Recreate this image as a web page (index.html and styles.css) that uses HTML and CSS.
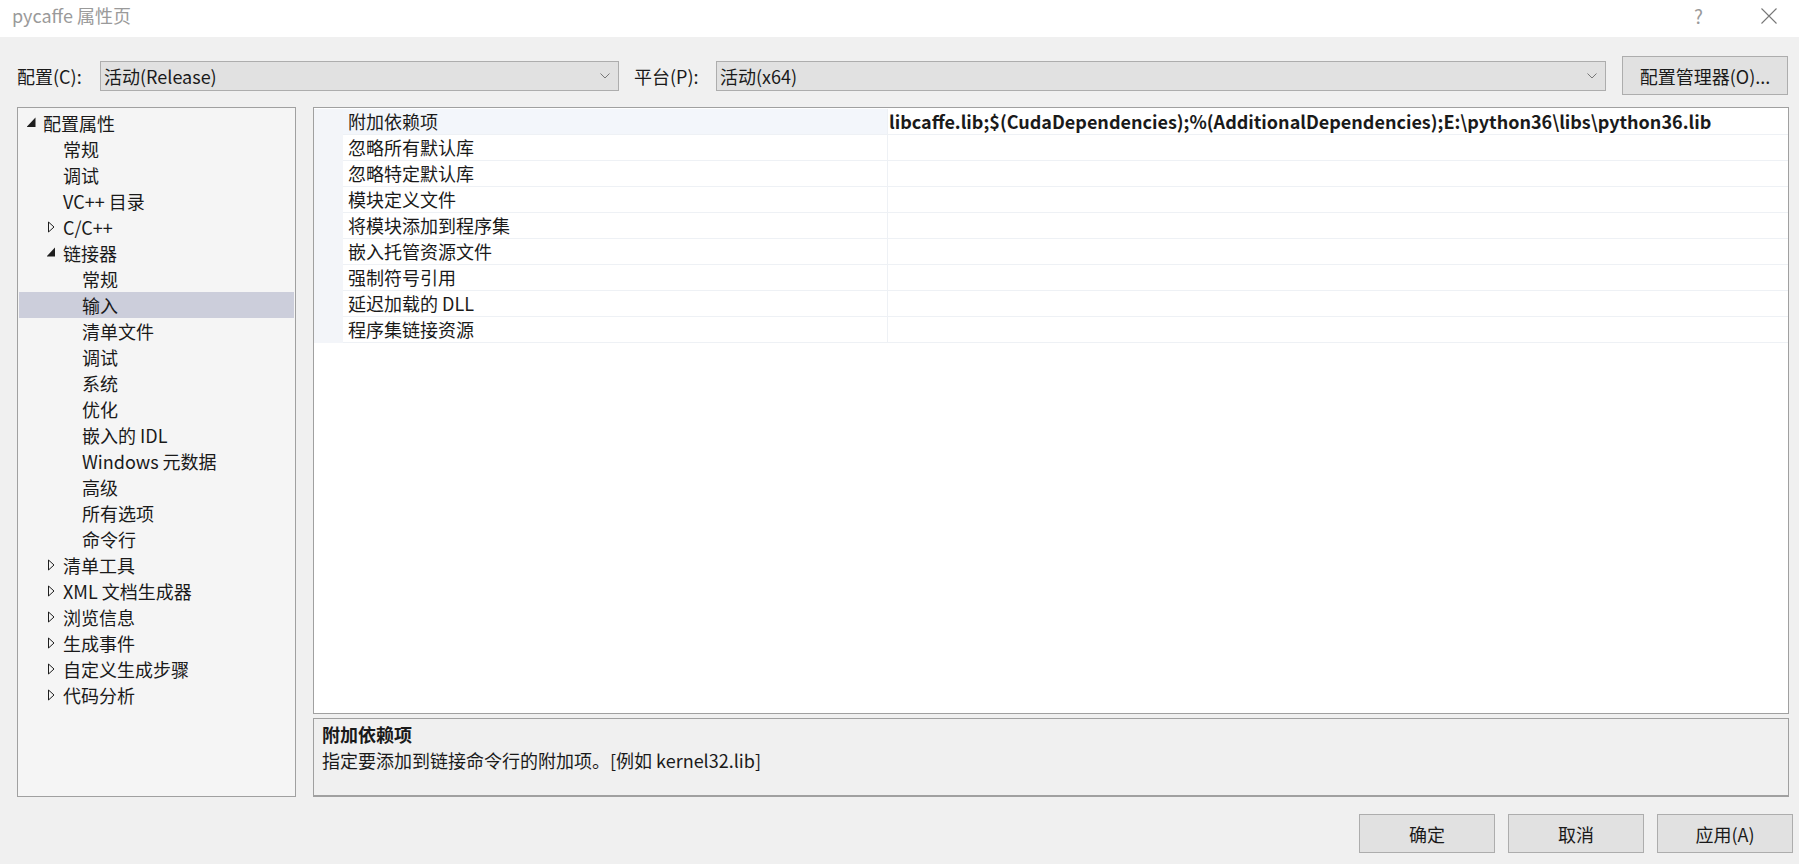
FILE: index.html
```html
<!DOCTYPE html>
<html lang="zh-CN">
<head>
<meta charset="utf-8"/>
<title>pycaffe 属性页</title>
<link rel="stylesheet" href="styles.css">
</head>
<body>
<div class="dialog">

  <!-- Barre de titre -->
  <div class="titlebar">
    <span class="title">pycaffe 属性页</span>
    <div class="caption">
      <span class="help">?</span>
      <svg class="close" width="16" height="16" viewBox="0 0 16 16">
        <path d="M0.5 0.5 L15.5 15.5 M15.5 0.5 L0.5 15.5" stroke="#777" stroke-width="1.1" fill="none"/>
      </svg>
    </div>
  </div>

  <!-- Configuration / plateforme -->
  <div class="toolbar">
    <label class="lbl-config">配置(C):</label>
    <div class="combo combo-config">
      <span>活动(Release)</span>
      <svg width="12" height="8" viewBox="0 0 12 8"><path d="M1.5 1.5 L6 6 L10.5 1.5" stroke="#777" stroke-width="1" fill="none"/></svg>
    </div>
    <label class="lbl-platform">平台(P):</label>
    <div class="combo combo-platform">
      <span>活动(x64)</span>
      <svg width="12" height="8" viewBox="0 0 12 8"><path d="M1.5 1.5 L6 6 L10.5 1.5" stroke="#777" stroke-width="1" fill="none"/></svg>
    </div>
    <button type="button" class="btn btn-manager">配置管理器(O)...</button>
  </div>

  <div class="main">
    <!-- Arborescence -->
    <div class="tree">
      <div class="node l0"><span class="arrow"><svg width="16" height="26" viewBox="0 0 16 26"><polygon points="8.5,7.5 8.5,17 -0.5,17" fill="#1e1e1e"/></svg></span>配置属性</div>
      <div class="node l1"><span class="arrow"></span>常规</div>
      <div class="node l1"><span class="arrow"></span>调试</div>
      <div class="node l1"><span class="arrow"></span>VC++ 目录</div>
      <div class="node l1"><span class="arrow"><svg width="16" height="26" viewBox="0 0 16 26"><polygon points="1.5,8 1.5,18 7,13" fill="none" stroke="#1e1e1e" stroke-width="1"/></svg></span>C/C++</div>
      <div class="node l1"><span class="arrow"><svg width="16" height="26" viewBox="0 0 16 26"><polygon points="8,7.5 8,16.5 -0.5,16.5" fill="#1e1e1e"/></svg></span>链接器</div>
      <div class="node l2"><span class="arrow"></span>常规</div>
      <div class="node l2 selected"><span class="arrow"></span>输入</div>
      <div class="node l2"><span class="arrow"></span>清单文件</div>
      <div class="node l2"><span class="arrow"></span>调试</div>
      <div class="node l2"><span class="arrow"></span>系统</div>
      <div class="node l2"><span class="arrow"></span>优化</div>
      <div class="node l2"><span class="arrow"></span>嵌入的 IDL</div>
      <div class="node l2"><span class="arrow"></span>Windows 元数据</div>
      <div class="node l2"><span class="arrow"></span>高级</div>
      <div class="node l2"><span class="arrow"></span>所有选项</div>
      <div class="node l2"><span class="arrow"></span>命令行</div>
      <div class="node l1"><span class="arrow"><svg width="16" height="26" viewBox="0 0 16 26"><polygon points="1.5,8 1.5,18 7,13" fill="none" stroke="#1e1e1e" stroke-width="1"/></svg></span>清单工具</div>
      <div class="node l1"><span class="arrow"><svg width="16" height="26" viewBox="0 0 16 26"><polygon points="1.5,8 1.5,18 7,13" fill="none" stroke="#1e1e1e" stroke-width="1"/></svg></span>XML 文档生成器</div>
      <div class="node l1"><span class="arrow"><svg width="16" height="26" viewBox="0 0 16 26"><polygon points="1.5,8 1.5,18 7,13" fill="none" stroke="#1e1e1e" stroke-width="1"/></svg></span>浏览信息</div>
      <div class="node l1"><span class="arrow"><svg width="16" height="26" viewBox="0 0 16 26"><polygon points="1.5,8 1.5,18 7,13" fill="none" stroke="#1e1e1e" stroke-width="1"/></svg></span>生成事件</div>
      <div class="node l1"><span class="arrow"><svg width="16" height="26" viewBox="0 0 16 26"><polygon points="1.5,8 1.5,18 7,13" fill="none" stroke="#1e1e1e" stroke-width="1"/></svg></span>自定义生成步骤</div>
      <div class="node l1"><span class="arrow"><svg width="16" height="26" viewBox="0 0 16 26"><polygon points="1.5,8 1.5,18 7,13" fill="none" stroke="#1e1e1e" stroke-width="1"/></svg></span>代码分析</div>
    </div>

    <div class="right">
      <!-- Grille de propriétés -->
      <div class="grid">
        <div class="row current"><div class="gutter"></div><div class="name">附加依赖项</div><div class="value">libcaffe.lib;$(CudaDependencies);%(AdditionalDependencies);E:\python36\libs\python36.lib</div></div>
        <div class="row"><div class="gutter"></div><div class="name">忽略所有默认库</div><div class="value"></div></div>
        <div class="row"><div class="gutter"></div><div class="name">忽略特定默认库</div><div class="value"></div></div>
        <div class="row"><div class="gutter"></div><div class="name">模块定义文件</div><div class="value"></div></div>
        <div class="row"><div class="gutter"></div><div class="name">将模块添加到程序集</div><div class="value"></div></div>
        <div class="row"><div class="gutter"></div><div class="name">嵌入托管资源文件</div><div class="value"></div></div>
        <div class="row"><div class="gutter"></div><div class="name">强制符号引用</div><div class="value"></div></div>
        <div class="row"><div class="gutter"></div><div class="name">延迟加载的 DLL</div><div class="value"></div></div>
        <div class="row"><div class="gutter"></div><div class="name">程序集链接资源</div><div class="value"></div></div>
      </div>

      <!-- Description -->
      <div class="desc">
        <div class="desc-title">附加依赖项</div>
        <div class="desc-text">指定要添加到链接命令行的附加项。[例如 kernel32.lib]</div>
      </div>
    </div>
  </div>

  <div class="footer">
    <button type="button" class="btn">确定</button>
    <button type="button" class="btn">取消</button>
    <button type="button" class="btn">应用(A)</button>
  </div>
</div>
</body>
</html>
```

FILE: styles.css
```css
:root{--bg:#f0f0f0;--border:#a0a0a0;--ctrl:#e1e1e1;--ctrl-border:#adadad;--text:#1a1a1a;}
*{margin:0;padding:0;box-sizing:border-box;font-family:"Noto Sans CJK SC","Noto Sans",sans-serif;}
body{background:var(--bg);color:var(--text);font-size:18px;width:1799px;height:864px;overflow:hidden;}
.dialog{display:flex;flex-direction:column;height:864px;}

.titlebar{height:37px;background:#fff;display:flex;justify-content:space-between;align-items:flex-start;}
.title{padding-left:12px;line-height:31px;color:#9a9a9a;font-size:18px;}
.caption{display:flex;align-items:center;height:31px;padding-right:22px;}
.help{color:#9a9a9a;font-size:19px;margin-right:58px;}
.close{display:block;}

.toolbar{display:flex;align-items:center;height:39px;margin-top:19px;padding-left:17px;}
.toolbar label{line-height:30px;}
.lbl-config{width:83px;}
.lbl-platform{width:82px;margin-left:15px;}
.combo{height:30px;background:var(--ctrl);border:1px solid var(--ctrl-border);display:flex;align-items:center;justify-content:space-between;padding:0 7px 0 3px;line-height:28px;}
.combo svg{display:block;}
.combo-config{width:519px;}
.combo-platform{width:890px;}
.btn{height:39px;background:var(--ctrl);border:1px solid var(--ctrl-border);font-size:18px;color:var(--text);width:136px;}
.btn-manager{width:166px;margin-left:16px;}

.main{display:flex;gap:17px;height:690px;margin-top:12px;padding-left:17px;}
.tree{width:279px;background:#f5f5f5;border:1px solid var(--border);padding:2px 1px;}
.node{height:26px;line-height:26px;display:flex;white-space:nowrap;}
.node .arrow{width:16px;height:26px;flex:none;}
.node .arrow svg{display:block;}
.l0{padding-left:8px;}
.l1{padding-left:28px;}
.l2{padding-left:47px;}
.selected{background:#cccedb;}

.right{width:1476px;display:flex;flex-direction:column;gap:4px;}
.grid{height:607px;background:#fff;border:1px solid var(--border);padding-top:1px;}
.row{display:flex;height:26px;line-height:25px;}
.gutter{width:29px;background:#f3f5f9;flex:none;}
.name{width:544px;padding-left:5px;border-bottom:1px solid #eef1f5;flex:none;}
.value{flex:1;border-left:1px solid #eef1f5;border-bottom:1px solid #eef1f5;padding-left:1px;font-weight:700;white-space:nowrap;}
.current .name{background:#f3f6fb;}

.desc{height:79px;border:1px solid var(--border);border-bottom-width:2px;background:var(--bg);padding:2px 8px;}
.desc-title{font-weight:700;line-height:26px;}
.desc-text{line-height:27px;}

.footer{display:flex;justify-content:flex-end;gap:13px;margin-top:17px;padding-right:6px;}
```
